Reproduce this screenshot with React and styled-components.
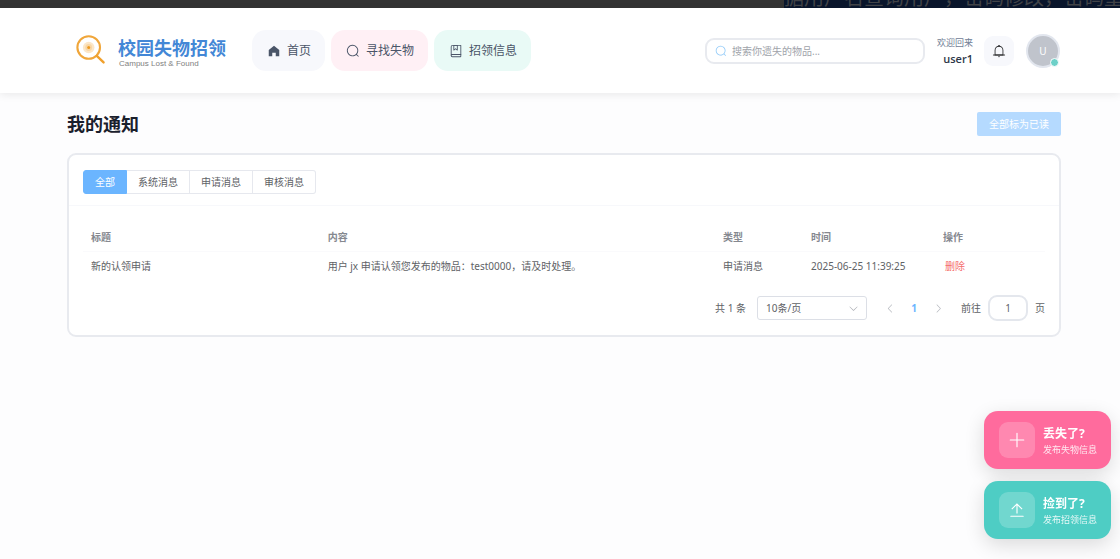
import React, { useState } from 'react';
import { styled, createGlobalStyle } from 'styled-components';

const ICONS = {
  home: ['M512 128 128 447.936V896h255.936V640H640v256h255.936V447.936z'],
  search: [
    'm795.904 750.72 124.992 124.928a32 32 0 0 1-45.248 45.248L750.656 795.904a416 416 0 1 1 45.248-45.248zM480 832a352 352 0 1 0 0-704 352 352 0 0 0 0 704z',
  ],
  collection: [
    'M192 736h640V128H256a64 64 0 0 0-64 64zm64-672h608a32 32 0 0 1 32 32v672a32 32 0 0 1-32 32H160l-32 57.536V192A128 128 0 0 1 256 64z',
    'M240 800a48 48 0 1 0 0 96h592v-96zm0-64h656v160a64 64 0 0 1-64 64H240a112 112 0 0 1 0-224zm144-608v250.88l96-76.8 96 76.8V128zm-64-64h320v381.44a32 32 0 0 1-51.968 24.96L480 384l-108.032 86.4A32 32 0 0 1 320 445.44z',
  ],
  bell: [
    'M512 64a64 64 0 0 1 64 64v64H448v-64a64 64 0 0 1 64-64',
    'M256 768h512V448a256 256 0 1 0-512 0zm256-640a320 320 0 0 1 320 320v384H192V448a320 320 0 0 1 320-320',
    'M96 768h832q32 0 32 32t-32 32H96q-32 0-32-32t32-32m352 128h128a64 64 0 0 1-128 0',
  ],
  plus: [
    'M480 480V128a32 32 0 0 1 64 0v352h352a32 32 0 1 1 0 64H544v352a32 32 0 1 1-64 0V544H128a32 32 0 0 1 0-64z',
  ],
  upload: [
    'M160 832h704a32 32 0 1 1 0 64H160a32 32 0 1 1 0-64m384-578.304V704h-64V247.296L237.248 490.048 192 444.8 508.8 128l316.8 316.8-45.312 45.248z',
  ],
  down: [
    'M831.872 340.864 512 652.672 192.128 340.864a30.592 30.592 0 0 0-42.752 0 29.12 29.12 0 0 0 0 41.6L489.664 714.24a32 32 0 0 0 44.672 0l340.288-331.712a29.12 29.12 0 0 0 0-41.728 30.592 30.592 0 0 0-42.752 0z',
  ],
  left: [
    'M609.408 149.376 277.76 489.6a32 32 0 0 0 0 44.672l331.648 340.352a29.12 29.12 0 0 0 41.728 0 30.592 30.592 0 0 0 0-42.752L339.264 511.936l311.872-319.872a30.592 30.592 0 0 0 0-42.688 29.12 29.12 0 0 0-41.728 0z',
  ],
  right: [
    'M340.864 149.312a30.592 30.592 0 0 0 0 42.752L652.736 512 340.864 831.872a30.592 30.592 0 0 0 0 42.752 29.12 29.12 0 0 0 41.728 0L714.24 534.336a32 32 0 0 0 0-44.672L382.592 149.376a29.12 29.12 0 0 0-41.728 0z',
  ],
};

const Icon = ({ name, size = 14 }) => (
  <svg width={size} height={size} viewBox="0 0 1024 1024" fill="currentColor" aria-hidden="true">
    {ICONS[name].map((d) => (
      <path key={d} d={d} />
    ))}
  </svg>
);

const LogoMark = () => (
  <svg width="32" height="32" viewBox="0 0 32 32" fill="none" aria-hidden="true">
    <circle cx="13.7" cy="12.5" r="11.3" stroke="#f0a63a" strokeWidth="2.1" />
    <circle cx="13.7" cy="12.5" r="5.8" fill="#fbe6c8" />
    <circle cx="13.7" cy="12.5" r="3.4" fill="#f8d6a4" />
    <circle cx="13.7" cy="12.5" r="1.5" fill="#ee9a20" />
    <path d="m21.8 20.8 6.8 6.6" stroke="#f0a02c" strokeWidth="2.4" strokeLinecap="round" />
  </svg>
);

const NAV = [
  { label: '首页', icon: 'home', bg: '#f7f8fc' },
  { label: '寻找失物', icon: 'search', bg: '#fff0f5' },
  { label: '招领信息', icon: 'collection', bg: '#e9faf6' },
];

const TABS = ['全部', '系统消息', '申请消息', '审核消息'];

const NOTICES = [
  {
    title: '新的认领申请',
    content: '用户 jx 申请认领您发布的物品：test0000，请及时处理。',
    type: '申请消息',
    time: '2025-06-25 11:39:25',
  },
];

const App = () => {
  const [tab, setTab] = useState(TABS[0]);

  return (
    <>
      <GlobalStyle />
      <Backdrop>
        <BackdropText>据用户名查询用户，密码修改，密码重</BackdropText>
      </Backdrop>
      <Header>
        <Logo href="#">
          <LogoMark />
          <LogoText>
            <LogoName>校园失物招领</LogoName>
            <LogoSub>Campus Lost &amp; Found</LogoSub>
          </LogoText>
        </Logo>
        <Nav>
          {NAV.map((item) => (
            <NavLink key={item.label} href="#" $bg={item.bg}>
              <Icon name={item.icon} />
              {item.label}
            </NavLink>
          ))}
        </Nav>
        <SearchBox>
          <Icon name="search" size={12} />
          <SearchInput type="search" aria-label="搜索" placeholder="搜索你遗失的物品..." />
        </SearchBox>
        <Welcome>
          <Greeting>欢迎回来</Greeting>
          <UserName>user1</UserName>
        </Welcome>
        <BellButton type="button" aria-label="通知">
          <Icon name="bell" />
        </BellButton>
        <Avatar type="button">
          U
          <Status />
        </Avatar>
      </Header>

      <Main>
        <TitleRow>
          <Title>我的通知</Title>
          <ReadAll type="button" disabled>
            全部标为已读
          </ReadAll>
        </TitleRow>
        <Card>
          <CardHead>
            <Tabs>
              {TABS.map((name) => (
                <Tab key={name} type="button" $active={name === tab} onClick={() => setTab(name)}>
                  {name}
                </Tab>
              ))}
            </Tabs>
          </CardHead>
          <CardBody>
            <Table>
              <thead>
                <tr>
                  <Th $width="24.6%">标题</Th>
                  <Th>内容</Th>
                  <Th $width="88px">类型</Th>
                  <Th $width="132px">时间</Th>
                  <Th $width="110px">操作</Th>
                </tr>
              </thead>
              <tbody>
                {NOTICES.map((row) => (
                  <tr key={row.time}>
                    <Td>{row.title}</Td>
                    <Td>{row.content}</Td>
                    <Td>{row.type}</Td>
                    <Td>{row.time}</Td>
                    <Td>
                      <DeleteButton type="button">删除</DeleteButton>
                    </Td>
                  </tr>
                ))}
              </tbody>
            </Table>
            <Pagination>
              <span>共 1 条</span>
              <SelectWrap>
                <PageSize aria-label="每页条数" defaultValue="10">
                  <option value="10">10条/页</option>
                </PageSize>
                <Icon name="down" size={11} />
              </SelectWrap>
              <Pager>
                <PageButton type="button" aria-label="上一页" disabled>
                  <Icon name="left" size={11} />
                </PageButton>
                <PageButton type="button" $current>
                  1
                </PageButton>
                <PageButton type="button" aria-label="下一页" disabled>
                  <Icon name="right" size={11} />
                </PageButton>
              </Pager>
              <Jump>
                前往
                <JumpInput type="text" defaultValue="1" />页
              </Jump>
            </Pagination>
          </CardBody>
        </Card>
      </Main>

      <Actions>
        <Action type="button" $bg="#ff6b9d">
          <ActionIcon>
            <Icon name="plus" size={18} />
          </ActionIcon>
          <ActionText>
            <ActionTitle>丢失了?</ActionTitle>
            <ActionSub>发布失物信息</ActionSub>
          </ActionText>
        </Action>
        <Action type="button" $bg="#4ecdc4">
          <ActionIcon>
            <Icon name="upload" size={18} />
          </ActionIcon>
          <ActionText>
            <ActionTitle>捡到了?</ActionTitle>
            <ActionSub>发布招领信息</ActionSub>
          </ActionText>
        </Action>
      </Actions>
    </>
  );
};

// ========== GLOBAL ========== //
const GlobalStyle = createGlobalStyle`
  * {
    box-sizing: border-box;
  }
  body {
    margin: 0;
    background: #fdfdfe;
    color: #606266;
    font-family: "Noto Sans", "Noto Sans CJK SC", sans-serif;
    font-size: 10px;
    line-height: 16px;
  }
  button, input, select {
    margin: 0;
    padding: 0;
    border: 0;
    color: inherit;
    font: inherit;
  }
  a {
    text-decoration: none;
  }
  svg {
    display: block;
    flex-shrink: 0;
  }
`;
// ========== TOP STRIP ========== //
const Backdrop = styled.div`
  display: flex;
  justify-content: flex-end;
  height: 8px;
  overflow: hidden;
  background: #333333;
`;
const BackdropText = styled.div`
  display: flex;
  align-items: flex-end;
  width: 30%;
  overflow: hidden;
  background: #09152b;
  color: #414347;
  font-size: 20px;
  line-height: 20px;
  white-space: nowrap;
`;
// ========== HEADER ========== //
const Header = styled.header`
  display: flex;
  align-items: center;
  height: 85px;
  padding: 0 60px 0 75px;
  background: #ffffff;
  box-shadow: 0 2px 8px rgba(0, 0, 0, 0.08);
`;
const Logo = styled.a`
  display: flex;
  align-items: center;
  gap: 11px;
  width: 177px;
`;
const LogoText = styled.span`
  display: flex;
  flex-direction: column;
  gap: 2px;
  padding-top: 4px;
`;
const LogoName = styled.span`
  color: #4387d6;
  font-size: 18px;
  font-weight: 700;
  line-height: 20px;
  white-space: nowrap;
`;
const LogoSub = styled.span`
  padding-left: 1px;
  color: #808080;
  font-family: "Liberation Sans", sans-serif;
  font-size: 8px;
  line-height: 8px;
`;
const Nav = styled.nav`
  display: flex;
  gap: 6px;
`;
const NavLink = styled.a`
  display: flex;
  align-items: center;
  gap: 6px;
  height: 41px;
  padding: 0 14px 0 15px;
  border-radius: 14px;
  background: ${(props) => props.$bg};
  color: #4a5568;
  font-size: 12px;
  white-space: nowrap;
`;
const SearchBox = styled.label`
  display: flex;
  align-items: center;
  gap: 5px;
  width: 220px;
  height: 26px;
  margin-left: auto;
  padding: 0 8px;
  border: 2px solid #e8eaef;
  border-radius: 9px;
  color: #8cc8f8;
`;
const SearchInput = styled.input`
  flex: 1;
  min-width: 0;
  outline: none;
  background: transparent;
  color: #606266;
  &::placeholder {
    color: #a0a3aa;
  }
`;
const Welcome = styled.div`
  display: flex;
  flex-direction: column;
  align-items: flex-end;
  margin: 0 11px 0 12px;
`;
const Greeting = styled.span`
  color: #718096;
  font-size: 9px;
`;
const UserName = styled.span`
  color: #2d3748;
  font-family: "Open Sans", sans-serif;
  font-size: 11px;
  font-weight: 600;
`;
const BellButton = styled.button`
  display: flex;
  justify-content: center;
  align-items: center;
  width: 30px;
  height: 30px;
  border-radius: 9px;
  background: #f7f8fc;
  color: #303133;
`;
const Avatar = styled.button`
  position: relative;
  width: 34px;
  height: 34px;
  margin-left: 12px;
  border: 2px solid #e2e6ee;
  border-radius: 50%;
  background: #c0c4cc;
  color: #ffffff;
`;
const Status = styled.span`
  position: absolute;
  right: -1px;
  bottom: -1px;
  width: 9px;
  height: 9px;
  border: 1px solid #ffffff;
  border-radius: 50%;
  background: #6dd0c8;
`;
// ========== CONTENT ========== //
const Main = styled.main`
  padding: 19px 59px 24px 67px;
`;
const TitleRow = styled.div`
  display: flex;
  justify-content: space-between;
  align-items: center;
  margin-bottom: 17px;
`;
const Title = styled.h1`
  margin: 0;
  color: #1a202c;
  font-size: 18px;
  font-weight: 700;
  line-height: 24px;
`;
const ReadAll = styled.button`
  height: 24px;
  padding: 0 12px;
  border-radius: 2px;
  background: #b5daff;
  color: #ffffff;
`;
const Card = styled.section`
  border: 2px solid #e8eaef;
  border-radius: 9px;
  background: #ffffff;
`;
const CardHead = styled.div`
  padding: 15px 14px 11px;
  border-bottom: 1px solid #f7f8fb;
`;
const Tabs = styled.div`
  display: flex;
`;
const Tab = styled.button`
  height: 24px;
  padding: 0 11px;
  border: 1px solid ${(props) => (props.$active ? '#6bb5ff' : '#e6e8ee')};
  border-left-width: ${(props) => (props.$active ? '1px' : '0')};
  background: ${(props) => (props.$active ? '#6bb5ff' : '#ffffff')};
  color: ${(props) => (props.$active ? '#ffffff' : '#606266')};
  &:first-child {
    border-radius: 3px 0 0 3px;
  }
  &:last-child {
    border-radius: 0 3px 3px 0;
  }
`;
const CardBody = styled.div`
  padding: 18px 14px 14px;
`;
const Table = styled.table`
  width: 100%;
  table-layout: fixed;
  border-collapse: collapse;
  text-align: left;
`;
const Th = styled.th`
  width: ${(props) => props.$width || 'auto'};
  height: 27px;
  padding: 0 8px;
  border-bottom: 1px solid #fafafc;
  color: #85888f;
  font-weight: 700;
`;
const Td = styled.td`
  height: 30px;
  padding: 0 8px;
`;
const DeleteButton = styled.button`
  padding: 0 2px;
  background: none;
  color: #f56c6c;
`;
const Pagination = styled.div`
  display: flex;
  justify-content: flex-end;
  align-items: center;
  gap: 11px;
  margin-top: 14px;
`;
const SelectWrap = styled.div`
  display: grid;
  align-items: center;
  width: 110px;
  color: #a8abb2;
  > * {
    grid-area: 1 / 1;
  }
  > svg {
    justify-self: end;
    margin-right: 8px;
    pointer-events: none;
  }
`;
const PageSize = styled.select`
  width: 100%;
  height: 24px;
  padding: 0 8px;
  border: 1px solid #dcdfe6;
  border-radius: 3px;
  appearance: none;
  background: #ffffff;
  color: #606266;
`;
const Pager = styled.div`
  display: flex;
`;
const PageButton = styled.button`
  display: flex;
  justify-content: center;
  align-items: center;
  width: 24px;
  height: 24px;
  background: none;
  color: ${(props) => (props.$current ? '#6bb5ff' : '#b4b7bd')};
  font-weight: 700;
`;
const Jump = styled.label`
  display: flex;
  align-items: center;
  gap: 7px;
`;
const JumpInput = styled.input`
  width: 40px;
  height: 26px;
  border: 2px solid #e4e7ed;
  border-radius: 9px;
  background: #ffffff;
  text-align: center;
`;
// ========== FLOATING ACTIONS ========== //
const Actions = styled.aside`
  position: fixed;
  right: 9px;
  bottom: 20px;
  display: flex;
  flex-direction: column;
  gap: 12px;
`;
const Action = styled.button`
  display: flex;
  align-items: center;
  gap: 8px;
  height: 58px;
  padding: 0 14px 0 15px;
  border-radius: 14px;
  background: ${(props) => props.$bg};
  box-shadow: 0 6px 20px rgba(0, 0, 0, 0.14);
  color: #ffffff;
  text-align: left;
`;
const ActionIcon = styled.span`
  display: flex;
  justify-content: center;
  align-items: center;
  width: 36px;
  height: 36px;
  border-radius: 9px;
  background: rgba(255, 255, 255, 0.2);
`;
const ActionText = styled.span`
  display: flex;
  flex-direction: column;
  padding-top: 3px;
`;
const ActionTitle = styled.span`
  font-size: 12px;
  font-weight: 700;
`;
const ActionSub = styled.span`
  font-size: 9px;
  opacity: 0.85;
`;

export default App;
